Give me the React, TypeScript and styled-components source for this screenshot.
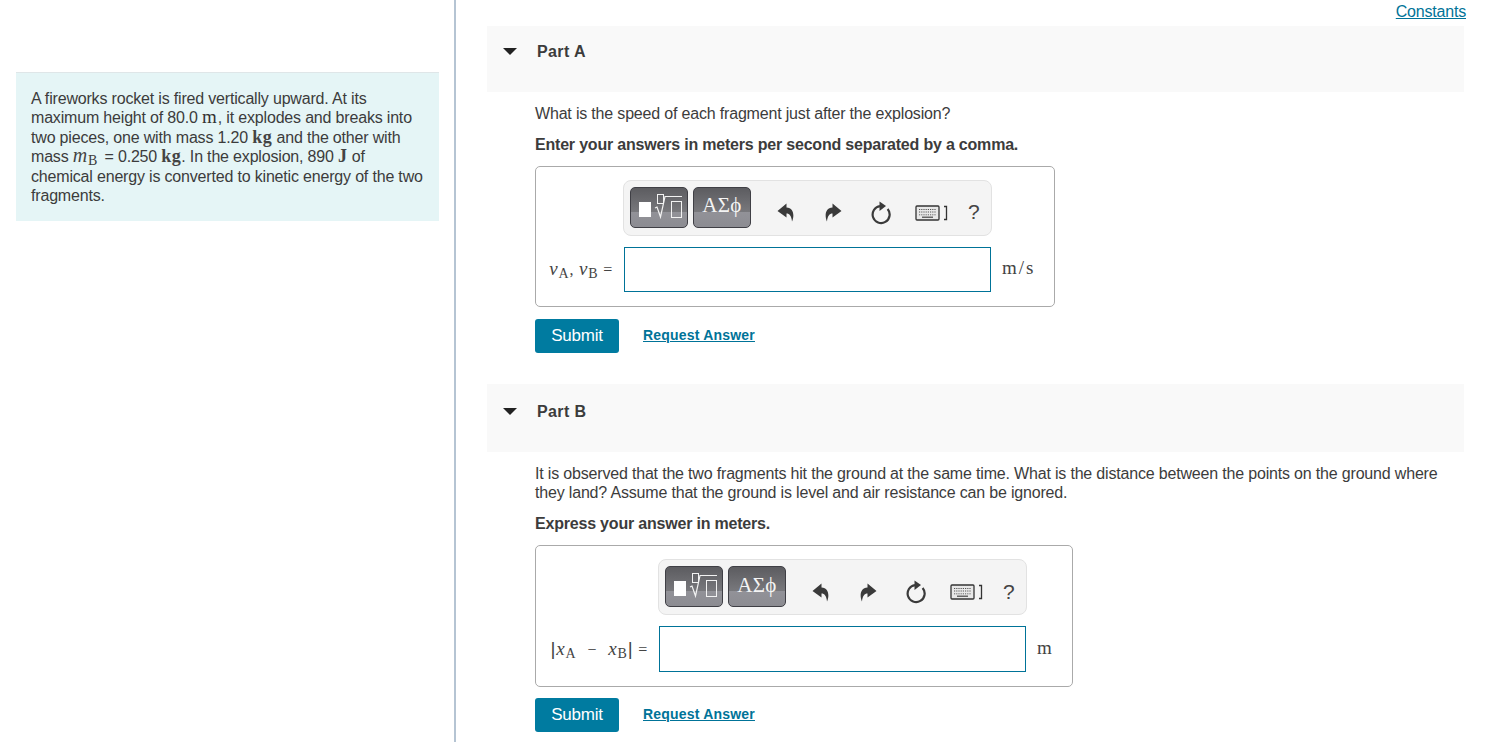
import React from "react";
import styled, { createGlobalStyle } from "styled-components";

const GlobalStyle = createGlobalStyle`
  html, body {
    margin: 0;
    padding: 0;
    height: 742px;
    overflow: hidden;
    background: #fff;
    font-family: "Liberation Sans", Arial, sans-serif;
    color: #3c3c3c;
  }
`;

const Page = styled.div`
  display: flex;
  height: 742px;
  width: 1490px;
  overflow: hidden;
`;
const Sidebar = styled.aside`
  width: 439px;
  box-sizing: content-box;
  flex-shrink: 0;
  padding: 72px 15px 0 0;
  border-right: 2px solid #b5c4d3;
`;
const Intro = styled.div`
  margin-left: 16px;
  height: 149px;
  box-sizing: border-box;
  padding: 16px 15px 0 15px;
  background: #e5f5f6;
  border-top: 1px solid #dfe6e8;
  font-size: 16px;
  line-height: 19.4px;
  letter-spacing: -0.18px;
`;
const Main = styled.main`
  flex: 1;
  padding: 0 26px 0 31px;
  min-width: 0;
`;
const TopBar = styled.div`
  display: flex;
  justify-content: flex-end;
  height: 26px;
  padding-top: 2px;
  margin-right: -2px;
  box-sizing: border-box;
`;
const ConstantsLink = styled.a`
  color: #007398;
  font-size: 16px;
  line-height: 19px;
  text-decoration: underline;
  letter-spacing: -0.2px;
`;
const PartHeader = styled.div<{ $height: number; $top: number }>`
  display: flex;
  align-items: flex-start;
  height: ${(p) => p.$height}px;
  background: #f9f9f9;
  box-sizing: border-box;
  padding: ${(p) => p.$top}px 0 0 16px;
`;
const Caret = styled.span`
  width: 0;
  height: 0;
  margin-top: 6px;
  border-left: 7px solid transparent;
  border-right: 7px solid transparent;
  border-top: 7px solid #222;
`;
const PartTitle = styled.h3`
  margin: 0 0 0 20px;
  font-size: 16px;
  line-height: 19px;
  font-weight: 700;
  letter-spacing: 0.4px;
  color: #3c3c3c;
`;
const PartBody = styled.div`
  padding: 12px 0 0 48px;
`;
const Question = styled.p`
  margin: 0;
  font-size: 16px;
  line-height: 19.4px;
  letter-spacing: -0.18px;
`;
const Instruction = styled.p`
  margin: 11.6px 0 11.4px;
  font-size: 16px;
  line-height: 19.4px;
  font-weight: 700;
  letter-spacing: -0.2px;
`;
const AnswerBox = styled.div<{ $width: number; $height: number }>`
  width: ${(p) => p.$width}px;
  height: ${(p) => p.$height}px;
  box-sizing: border-box;
  border: 1px solid #aaa;
  border-radius: 5px;
  display: flex;
  flex-direction: column;
  padding: 13px 0 0;
`;
const ToolbarRow = styled.div<{ $left: number }>`
  padding-left: ${(p) => p.$left}px;
`;
const Toolbar = styled.div`
  width: 369px;
  height: 56px;
  box-sizing: border-box;
  background: #f4f4f4;
  border: 1px solid #e2e2e2;
  border-radius: 8px;
  display: flex;
  align-items: flex-start;
  padding: 6px 0 0 6px;
`;
const TemplateButton = styled.div<{ $gap?: boolean }>`
  width: 58px;
  height: 41px;
  box-sizing: border-box;
  margin-right: ${(p) => (p.$gap ? 5 : 0)}px;
  border: 1px solid #3f3f45;
  border-radius: 5px;
  background: linear-gradient(#5c5c60 0, #78787c 61%, #929298 61%, #8c8c92 100%);
  display: flex;
  align-items: center;
  justify-content: center;
  color: #f4f4f4;
  overflow: hidden;
`;
const Greek = styled.span`
  font-family: "Liberation Serif", "DejaVu Serif", serif;
  font-size: 21px;
  line-height: 20px;
  margin-top: -4px;
  letter-spacing: 0.3px;
`;
const ToolIcons = styled.div`
  display: flex;
  align-items: center;
  margin-left: 26px;
  height: 40px;
  margin-top: 6px;
`;
const ToolSlot = styled.span<{ $width: number }>`
  width: ${(p) => p.$width}px;
  display: flex;
  justify-content: flex-start;
  align-items: center;
`;
const HelpMark = styled.span`
  font-size: 21px;
  color: #444;
  margin-top: -1px;
`;
const InputRow = styled.div`
  display: flex;
  align-items: center;
  margin-top: 11px;
`;
const MathLabel = styled.div<{ $width: number }>`
  width: ${(p) => p.$width}px;
  flex-shrink: 0;
  box-sizing: border-box;
  padding-right: 11px;
  display: flex;
  justify-content: flex-end;
  align-items: baseline;
  white-space: pre;
  font-family: "Liberation Serif", "DejaVu Serif", serif;
  font-size: 16px;
  letter-spacing: 0.8px;
  color: #444;
`;
const MathVar = styled.i`
  font-family: "Liberation Serif", serif;
  font-size: 19px;
`;
const MathSub = styled.span`
  font-size: 14px;
  position: relative;
  top: 3px;
`;
const MathBar = styled.span`
  font-size: 19px;
  font-family: "Liberation Sans", sans-serif;
  font-weight: 400;
`;
const MathMinus = styled.span`
  margin: 0 11px;
`;
const AnswerInput = styled.div<{ $width: number; $height: number }>`
  width: ${(p) => p.$width}px;
  height: ${(p) => p.$height}px;
  box-sizing: border-box;
  border: 1px solid #007398;
  background: #fff;
`;
const Unit = styled.span`
  margin-left: 11px;
  font-family: "Liberation Serif", "DejaVu Serif", serif;
  font-size: 19px;
  letter-spacing: 2px;
  color: #444;
  position: relative;
  top: -1px;
`;
const Actions = styled.div<{ $top: number }>`
  display: flex;
  align-items: center;
  margin-top: ${(p) => p.$top}px;
  height: 34px;
`;
const SubmitButton = styled.button`
  width: 84px;
  height: 34px;
  background: #007ba0;
  color: #fff;
  border: 0;
  border-radius: 3px;
  padding: 0;
  font-family: "Liberation Sans", Arial, sans-serif;
  font-size: 17px;
  letter-spacing: -0.2px;
`;
const RequestLink = styled.a`
  margin: 0 0 2px 24px;
  color: #007398;
  font-size: 14px;
  font-weight: 700;
  text-decoration: underline;
  letter-spacing: 0.2px;
`;
const InlineUnit = styled.span`
  font-family: "Liberation Serif", serif;
  font-size: 19px;
  line-height: 0;
  letter-spacing: 1px;
  color: #333;
`;
const BoldUnit = styled(InlineUnit)`
  font-weight: 700;
  font-size: 18px;
  letter-spacing: 0.5px;
  color: #444;
`;
const ItalicMass = styled.i`
  font-family: "Liberation Serif", serif;
  font-size: 20px;
  line-height: 0;
  color: #444;
`;
const MassSub = styled.span`
  font-family: "Liberation Serif", serif;
  font-size: 14px;
  line-height: 0;
  margin: 0 3px 0 1px;
  position: relative;
  top: 3px;
`;
const SectionGap = styled.div`
  height: 31px;
`;

const TemplateIcon = () => (
  <svg width="56" height="39" viewBox="0 0 56 39" fill="none">
    <rect x="8" y="14" width="12" height="15" fill="#fff" />
    <rect x="26.5" y="6.5" width="6" height="9" stroke="#f2f2f2" strokeWidth="1" />
    <path d="M24 20l2-1 3.5 10L34 8.5h17" stroke="#f2f2f2" strokeWidth="1.2" />
    <rect x="40.5" y="13.5" width="10" height="16" stroke="#f2f2f2" strokeWidth="1" />
  </svg>
);

const UndoIcon = () => (
  <svg width="17" height="19" viewBox="0 0 17 19">
    <path d="M9.5 0.5L0.5 8l9 6.5v-4c3 0 5 2.5 5.5 8C17.5 13 17 5 9.5 4.5z" fill="#3a3a3a" />
  </svg>
);
const RedoIcon = () => (
  <svg width="17" height="19" viewBox="0 0 17 19">
    <path d="M7.5 0.5L16.5 8l-9 6.5v-4c-3 0-5 2.5-5.5 8C-0.5 13 0 5 7.5 4.5z" fill="#3a3a3a" />
  </svg>
);
const ResetIcon = () => (
  <svg width="21" height="24" viewBox="0 0 21 24" fill="none">
    <path d="M16.6 8A8.5 8.5 0 1 1 9 5.1" stroke="#3a3a3a" strokeWidth="2.2" />
    <path d="M8.5 0.5L15 5 8.5 10z" fill="#3a3a3a" />
  </svg>
);
const KeyboardIcon = () => (
  <svg width="33" height="16" viewBox="0 0 33 16" fill="none">
    <rect x="1" y="1" width="23" height="14" rx="1" fill="#e8e8e8" stroke="#333" strokeWidth="1.3" />
    <path d="M4 4.5h17M4 7h17" stroke="#555" strokeWidth="1.2" strokeDasharray="1.2 1" />
    <path d="M4 9.8h17" stroke="#666" strokeWidth="1" strokeDasharray="1.2 1" />
    <path d="M7 12.2h11" stroke="#444" strokeWidth="1.2" />
    <path d="M29 1.5h2.5v13H29" stroke="#333" strokeWidth="1.3" />
  </svg>
);

const MathTools = () => (
  <Toolbar>
    <TemplateButton $gap>
      <TemplateIcon />
    </TemplateButton>
    <TemplateButton>
      <Greek>ΑΣϕ</Greek>
    </TemplateButton>
    <ToolIcons>
      <ToolSlot $width={48}><UndoIcon /></ToolSlot>
      <ToolSlot $width={46}><RedoIcon /></ToolSlot>
      <ToolSlot $width={44}><ResetIcon /></ToolSlot>
      <ToolSlot $width={53}><KeyboardIcon /></ToolSlot>
      <HelpMark>?</HelpMark>
    </ToolIcons>
  </Toolbar>
);

const Answer = ({
  width,
  boxHeight,
  toolbarLeft,
  labelWidth,
  inputHeight,
  actionsTop,
  unit,
  children,
}: {
  width: number;
  boxHeight: number;
  toolbarLeft: number;
  labelWidth: number;
  inputHeight: number;
  actionsTop: number;
  unit: string;
  children: React.ReactNode;
}) => (
  <>
    <AnswerBox $width={width} $height={boxHeight}>
      <ToolbarRow $left={toolbarLeft}>
        <MathTools />
      </ToolbarRow>
      <InputRow>
        <MathLabel $width={labelWidth}>{children}</MathLabel>
        <AnswerInput $width={367} $height={inputHeight} />
        <Unit>{unit}</Unit>
      </InputRow>
    </AnswerBox>
    <Actions $top={actionsTop}>
      <SubmitButton>Submit</SubmitButton>
      <RequestLink>Request Answer</RequestLink>
    </Actions>
  </>
);

export default function App() {
  return (
    <Page>
      <GlobalStyle />
      <Sidebar>
        <Intro>
          A fireworks rocket is fired vertically upward. At its maximum height
          of 80.0 <InlineUnit>m</InlineUnit>, it explodes and breaks into two pieces,
          one with mass 1.20 <BoldUnit>kg</BoldUnit> and the other with mass{" "}
          <ItalicMass>m</ItalicMass>
          <MassSub>B</MassSub> = 0.250 <BoldUnit>kg</BoldUnit>. In the explosion,
          890 <BoldUnit>J</BoldUnit> of chemical energy is converted to kinetic
          energy of the two fragments.
        </Intro>
      </Sidebar>
      <Main>
        <TopBar>
          <ConstantsLink>Constants</ConstantsLink>
        </TopBar>
        <PartHeader $height={66} $top={16}>
          <Caret />
          <PartTitle>Part A</PartTitle>
        </PartHeader>
        <PartBody>
          <Question>What is the speed of each fragment just after the explosion?</Question>
          <Instruction>Enter your answers in meters per second separated by a comma.</Instruction>
          <Answer width={520} boxHeight={141} toolbarLeft={87} labelWidth={88} inputHeight={45} actionsTop={12} unit="m/s">
            <MathVar>v</MathVar>
            <MathSub>A</MathSub>
            {", "}
            <MathVar>v</MathVar>
            <MathSub>B</MathSub>
            {" ="}
          </Answer>
        </PartBody>
        <SectionGap />
        <PartHeader $height={68} $top={18}>
          <Caret />
          <PartTitle>Part B</PartTitle>
        </PartHeader>
        <PartBody>
          <Question>
            It is observed that the two fragments hit the ground at the same time. What is the
            distance between the points on the ground where they land? Assume that the ground is
            level and air resistance can be ignored.
          </Question>
          <Instruction>Express your answer in meters.</Instruction>
          <Answer width={538} boxHeight={142} toolbarLeft={122} labelWidth={123} inputHeight={46} actionsTop={11} unit="m">
            <MathBar>|</MathBar>
            <MathVar>x</MathVar>
            <MathSub>A</MathSub>
            <MathMinus>−</MathMinus>
            <MathVar>x</MathVar>
            <MathSub>B</MathSub>
            <MathBar>|</MathBar>
            {" ="}
          </Answer>
        </PartBody>
      </Main>
    </Page>
  );
}
